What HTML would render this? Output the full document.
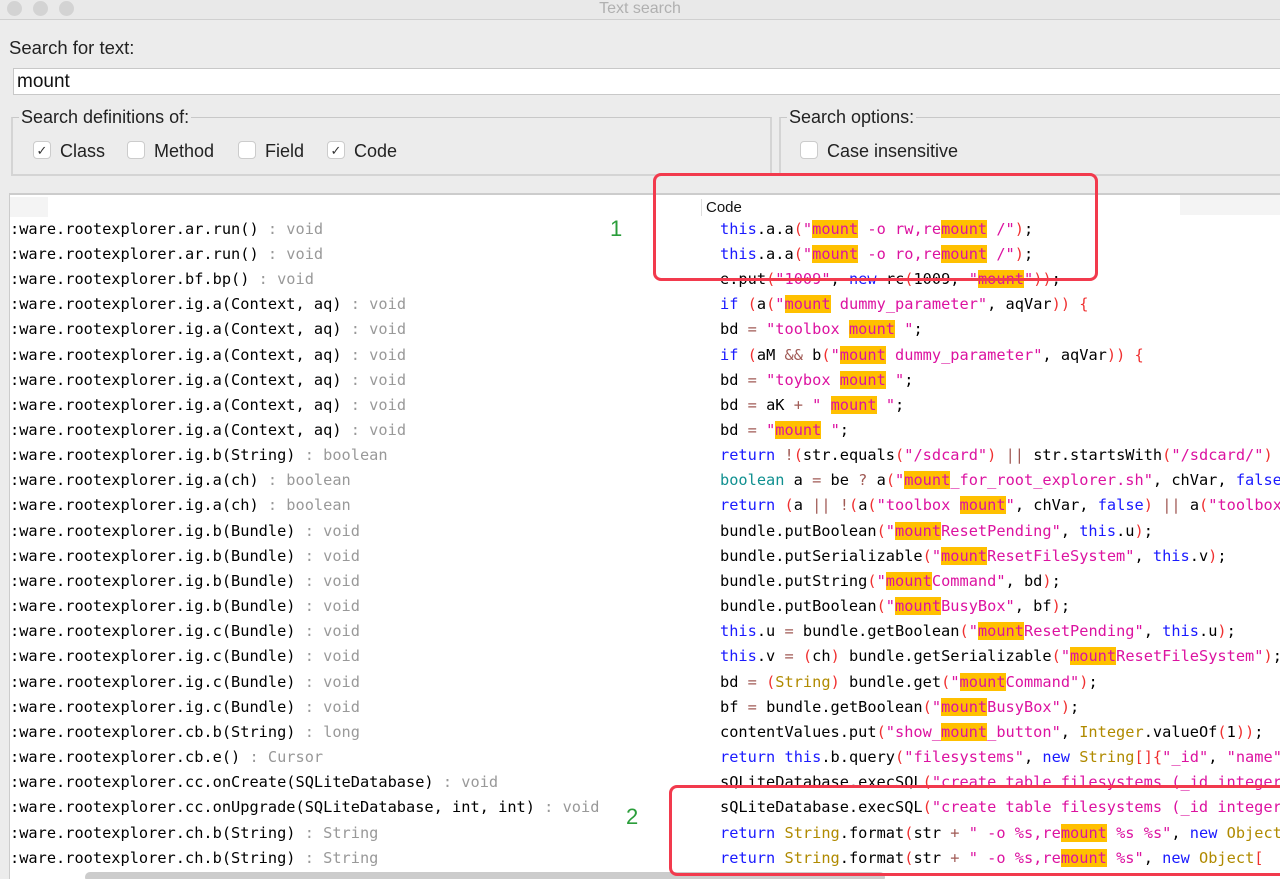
<!DOCTYPE html>
<html><head><meta charset="utf-8"><style>
*{margin:0;padding:0;box-sizing:border-box}
html{width:1280px;height:879px;overflow:hidden}
body{width:1280px;height:879px;overflow:hidden;background:#ececec;font-family:"Liberation Sans",sans-serif;position:relative}
.tb{position:absolute;left:0;top:0;width:1280px;height:20px;background:#e9e9e9;border-bottom:1px solid #d0d0d0}
.dot{position:absolute;top:1px;width:15px;height:15px;border-radius:50%;background:#d3d3d3}
.title{position:absolute;top:0;width:100%;text-align:center;font-size:16px;color:#b0b0b0;line-height:18px}
.lbl{position:absolute;left:9px;top:37px;font-size:18.5px;color:#222}
.inp{position:absolute;left:13px;top:68px;width:1267px;height:27px;background:#fff;border:1px solid #c8c8c8;border-right:none;font-size:19px;padding:2px 0 0 3px;color:#111}
.fs{position:absolute;border:2px solid #d4d4d4;border-top:1px solid #c8c8c8}
.leg{position:absolute;top:-11px;background:#ececec;font-size:18px;color:#222;padding:0 2px}
.cb{position:absolute;top:141px;width:18px;height:18px;background:#fff;border:1px solid #ccc;border-radius:4px;font-size:13px;text-align:center;line-height:17px;color:#333}
.cl{position:absolute;top:141px;font-size:18px;color:#222}
.panel{position:absolute;left:9px;top:193px;width:1271px;height:686px;background:#fff;border-top:2px solid #ccc;border-left:1px solid #ccc;overflow:hidden}
.mono{font-family:"DejaVu Sans Mono","Liberation Mono",monospace;font-size:15.3px;white-space:pre}
.row{position:absolute;height:25px;line-height:25px}
.g{color:#999}
.k{color:#1a1aff}.s{color:#dc12a0}.p{color:#f03030}.t{color:#b08a00}.o{color:#a05a55}.b{color:#109090}
.h{background:#ffc000;color:#dc12a0}
.red{position:absolute;border:3px solid #f23a4d;border-radius:8px}
.num{position:absolute;color:#2a9d3a;font-size:22px}
</style></head><body>
<div class="tb"><div class="dot" style="left:7px"></div><div class="dot" style="left:33px"></div><div class="dot" style="left:59px"></div><div class="title">Text search</div></div>
<div class="lbl">Search for text:</div>
<div class="inp">mount</div>
<div class="fs" style="left:11px;top:117px;width:761px;height:59px"><div class="leg" style="left:6px">Search definitions of:</div></div>
<div class="fs" style="left:779px;top:117px;width:501px;height:59px;border-right:none"><div class="leg" style="left:6px">Search options:</div></div>
<div class="cb" style="left:33px">✓</div><div class="cl" style="left:60px">Class</div>
<div class="cb" style="left:127px"></div><div class="cl" style="left:154px">Method</div>
<div class="cb" style="left:238px"></div><div class="cl" style="left:265px">Field</div>
<div class="cb" style="left:327px">✓</div><div class="cl" style="left:354px">Code</div>
<div class="cb" style="left:800px"></div><div class="cl" style="left:827px">Case insensitive</div>
<div class="panel">
<div style="position:absolute;left:0;top:2px;width:38px;height:20px;background:#f4f4f4"></div>
<div style="position:absolute;left:1170px;top:0;width:110px;height:20px;background:#f4f4f4"></div>
<div style="position:absolute;left:691px;top:4px;font-size:15px;color:#111;border-left:1px solid #ddd;padding-left:4px">Code</div>
<div style="position:absolute;left:75px;top:677px;width:800px;height:10px;background:#ccc;border-radius:5px"></div>
</div>
<div class="mono" style="position:absolute;left:0;top:0">
<div class="row" style="left:10px;top:217px">:ware.rootexplorer.ar.run() <span class="g">: void</span></div>
<div class="row" style="left:10px;top:242px">:ware.rootexplorer.ar.run() <span class="g">: void</span></div>
<div class="row" style="left:10px;top:267px">:ware.rootexplorer.bf.bp() <span class="g">: void</span></div>
<div class="row" style="left:10px;top:292px">:ware.rootexplorer.ig.a(Context, aq) <span class="g">: void</span></div>
<div class="row" style="left:10px;top:317px">:ware.rootexplorer.ig.a(Context, aq) <span class="g">: void</span></div>
<div class="row" style="left:10px;top:343px">:ware.rootexplorer.ig.a(Context, aq) <span class="g">: void</span></div>
<div class="row" style="left:10px;top:368px">:ware.rootexplorer.ig.a(Context, aq) <span class="g">: void</span></div>
<div class="row" style="left:10px;top:393px">:ware.rootexplorer.ig.a(Context, aq) <span class="g">: void</span></div>
<div class="row" style="left:10px;top:418px">:ware.rootexplorer.ig.a(Context, aq) <span class="g">: void</span></div>
<div class="row" style="left:10px;top:443px">:ware.rootexplorer.ig.b(String) <span class="g">: boolean</span></div>
<div class="row" style="left:10px;top:468px">:ware.rootexplorer.ig.a(ch) <span class="g">: boolean</span></div>
<div class="row" style="left:10px;top:493px">:ware.rootexplorer.ig.a(ch) <span class="g">: boolean</span></div>
<div class="row" style="left:10px;top:519px">:ware.rootexplorer.ig.b(Bundle) <span class="g">: void</span></div>
<div class="row" style="left:10px;top:544px">:ware.rootexplorer.ig.b(Bundle) <span class="g">: void</span></div>
<div class="row" style="left:10px;top:569px">:ware.rootexplorer.ig.b(Bundle) <span class="g">: void</span></div>
<div class="row" style="left:10px;top:594px">:ware.rootexplorer.ig.b(Bundle) <span class="g">: void</span></div>
<div class="row" style="left:10px;top:619px">:ware.rootexplorer.ig.c(Bundle) <span class="g">: void</span></div>
<div class="row" style="left:10px;top:644px">:ware.rootexplorer.ig.c(Bundle) <span class="g">: void</span></div>
<div class="row" style="left:10px;top:670px">:ware.rootexplorer.ig.c(Bundle) <span class="g">: void</span></div>
<div class="row" style="left:10px;top:695px">:ware.rootexplorer.ig.c(Bundle) <span class="g">: void</span></div>
<div class="row" style="left:10px;top:720px">:ware.rootexplorer.cb.b(String) <span class="g">: long</span></div>
<div class="row" style="left:10px;top:745px">:ware.rootexplorer.cb.e() <span class="g">: Cursor</span></div>
<div class="row" style="left:10px;top:770px">:ware.rootexplorer.cc.onCreate(SQLiteDatabase) <span class="g">: void</span></div>
<div class="row" style="left:10px;top:795px">:ware.rootexplorer.cc.onUpgrade(SQLiteDatabase, int, int) <span class="g">: void</span></div>
<div class="row" style="left:10px;top:821px">:ware.rootexplorer.ch.b(String) <span class="g">: String</span></div>
<div class="row" style="left:10px;top:846px">:ware.rootexplorer.ch.b(String) <span class="g">: String</span></div>

<div class="row" style="left:720px;top:217px"><span class="k">this</span>.a.a<span class="p">(</span><span class="s">"<span class="h">mount</span> -o rw,re<span class="h">mount</span> /"</span><span class="p">)</span>;</div>
<div class="row" style="left:720px;top:242px"><span class="k">this</span>.a.a<span class="p">(</span><span class="s">"<span class="h">mount</span> -o ro,re<span class="h">mount</span> /"</span><span class="p">)</span>;</div>
<div class="row" style="left:720px;top:267px">e.put<span class="p">(</span><span class="s">"1009"</span>, <span class="k">new</span> rc<span class="p">(</span>1009, <span class="s">"<span class="h">mount</span>"</span><span class="p">))</span>;</div>
<div class="row" style="left:720px;top:292px"><span class="k">if</span> <span class="p">(</span>a<span class="p">(</span><span class="s">"<span class="h">mount</span> dummy_parameter"</span>, aqVar<span class="p">)) {</span></div>
<div class="row" style="left:720px;top:317px">bd <span class="o">=</span> <span class="s">"toolbox <span class="h">mount</span> "</span>;</div>
<div class="row" style="left:720px;top:343px"><span class="k">if</span> <span class="p">(</span>aM <span class="o">&amp;&amp;</span> b<span class="p">(</span><span class="s">"<span class="h">mount</span> dummy_parameter"</span>, aqVar<span class="p">)) {</span></div>
<div class="row" style="left:720px;top:368px">bd <span class="o">=</span> <span class="s">"toybox <span class="h">mount</span> "</span>;</div>
<div class="row" style="left:720px;top:393px">bd <span class="o">=</span> aK <span class="o">+</span> <span class="s">" <span class="h">mount</span> "</span>;</div>
<div class="row" style="left:720px;top:418px">bd <span class="o">=</span> <span class="s">"<span class="h">mount</span> "</span>;</div>
<div class="row" style="left:720px;top:443px"><span class="k">return</span> <span class="o">!</span><span class="p">(</span>str.equals<span class="p">(</span><span class="s">"/sdcard"</span><span class="p">)</span> <span class="o">||</span> str.startsWith<span class="p">(</span><span class="s">"/sdcard/"</span><span class="p">)</span></div>
<div class="row" style="left:720px;top:468px"><span class="b">boolean</span> a <span class="o">=</span> be <span class="o">?</span> a<span class="p">(</span><span class="s">"<span class="h">mount</span>_for_root_explorer.sh"</span>, chVar, <span class="k">false</span></div>
<div class="row" style="left:720px;top:493px"><span class="k">return</span> <span class="p">(</span>a <span class="o">||</span> <span class="o">!</span><span class="p">(</span>a<span class="p">(</span><span class="s">"toolbox <span class="h">mount</span>"</span>, chVar, <span class="k">false</span><span class="p">)</span> <span class="o">||</span> a<span class="p">(</span><span class="s">"toolbox</span></div>
<div class="row" style="left:720px;top:519px">bundle.putBoolean<span class="p">(</span><span class="s">"<span class="h">mount</span>ResetPending"</span>, <span class="k">this</span>.u<span class="p">)</span>;</div>
<div class="row" style="left:720px;top:544px">bundle.putSerializable<span class="p">(</span><span class="s">"<span class="h">mount</span>ResetFileSystem"</span>, <span class="k">this</span>.v<span class="p">)</span>;</div>
<div class="row" style="left:720px;top:569px">bundle.putString<span class="p">(</span><span class="s">"<span class="h">mount</span>Command"</span>, bd<span class="p">)</span>;</div>
<div class="row" style="left:720px;top:594px">bundle.putBoolean<span class="p">(</span><span class="s">"<span class="h">mount</span>BusyBox"</span>, bf<span class="p">)</span>;</div>
<div class="row" style="left:720px;top:619px"><span class="k">this</span>.u <span class="o">=</span> bundle.getBoolean<span class="p">(</span><span class="s">"<span class="h">mount</span>ResetPending"</span>, <span class="k">this</span>.u<span class="p">)</span>;</div>
<div class="row" style="left:720px;top:644px"><span class="k">this</span>.v <span class="o">=</span> <span class="p">(</span>ch<span class="p">)</span> bundle.getSerializable<span class="p">(</span><span class="s">"<span class="h">mount</span>ResetFileSystem"</span><span class="p">)</span>;</div>
<div class="row" style="left:720px;top:670px">bd <span class="o">=</span> <span class="p">(</span><span class="t">String</span><span class="p">)</span> bundle.get<span class="p">(</span><span class="s">"<span class="h">mount</span>Command"</span><span class="p">)</span>;</div>
<div class="row" style="left:720px;top:695px">bf <span class="o">=</span> bundle.getBoolean<span class="p">(</span><span class="s">"<span class="h">mount</span>BusyBox"</span><span class="p">)</span>;</div>
<div class="row" style="left:720px;top:720px">contentValues.put<span class="p">(</span><span class="s">"show_<span class="h">mount</span>_button"</span>, <span class="t">Integer</span>.valueOf<span class="p">(</span>1<span class="p">))</span>;</div>
<div class="row" style="left:720px;top:745px"><span class="k">return</span> <span class="k">this</span>.b.query<span class="p">(</span><span class="s">"filesystems"</span>, <span class="k">new</span> <span class="t">String</span><span class="p">[]{</span><span class="s">"_id"</span>, <span class="s">"name"</span></div>
<div class="row" style="left:720px;top:770px">sQLiteDatabase.execSQL<span class="p">(</span><span class="s">"create table filesystems (_id integer</span></div>
<div class="row" style="left:720px;top:795px">sQLiteDatabase.execSQL<span class="p">(</span><span class="s">"create table filesystems (_id integer</span></div>
<div class="row" style="left:720px;top:821px"><span class="k">return</span> <span class="t">String</span>.format<span class="p">(</span>str <span class="o">+</span> <span class="s">" -o %s,re<span class="h">mount</span> %s %s"</span>, <span class="k">new</span> <span class="t">Object</span></div>
<div class="row" style="left:720px;top:846px"><span class="k">return</span> <span class="t">String</span>.format<span class="p">(</span>str <span class="o">+</span> <span class="s">" -o %s,re<span class="h">mount</span> %s"</span>, <span class="k">new</span> <span class="t">Object</span><span class="p">[</span></div>
</div>
<div class="red" style="left:653px;top:173px;width:445px;height:108px"></div>
<div class="red" style="left:669px;top:785px;width:630px;height:91px"></div>
<div class="num" style="left:610px;top:216px">1</div>
<div class="num" style="left:626px;top:804px">2</div>
</body></html>
